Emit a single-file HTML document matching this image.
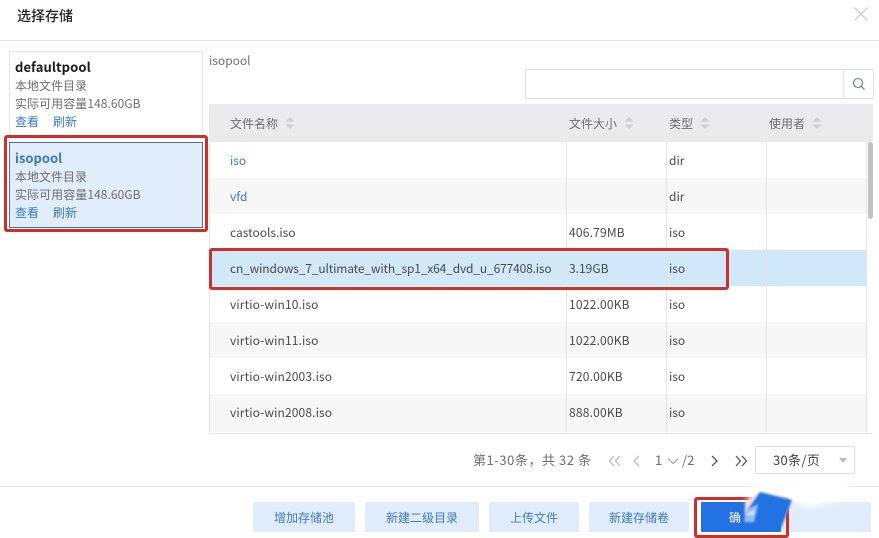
<!DOCTYPE html>
<html lang="zh"><head><meta charset="utf-8"><title>选择存储</title>
<style>
html,body{margin:0;padding:0;width:879px;height:538px;overflow:hidden;background:#fff}
body{position:relative;font-family:"Noto Sans CJK SC","Liberation Sans",sans-serif;font-size:12px;color:#555}
.a{position:absolute}
.t{position:absolute;white-space:nowrap;line-height:16px}
.l{background:#e4e4e6}
.blue{color:#3a7cbd}
.g{color:#6e6e6e}
.btn{position:absolute;top:502px;height:30px;background:#e1ecfa;color:#3f7cc0;text-align:center;line-height:32px;border-radius:1px}
.red{position:absolute;border:3px solid #cf2e29;border-radius:3px;box-sizing:border-box}
.c{color:#4a4a4a}
.v{letter-spacing:.12px}
.n{letter-spacing:.2px}
.p{font-size:13px}
</style></head><body>
<div class="t" style="left:17px;top:8px;font-size:14px;color:#222;font-weight:500">选择存储</div>
<svg class="a" style="left:853px;top:7px" width="16" height="14"><path d="M1.500 0.500L14.500 13.500M14.500 0.500L1.500 13.500" stroke="#c4c4c4" stroke-width="1.100" fill="none"/></svg>
<div class="a l" style="left:0;top:40px;width:879px;height:1px"></div>

<div class="a" style="left:9px;top:51px;width:192px;height:85px;border:1px solid #e5e5e5;border-bottom:0"></div>
<div class="t" style="left:15px;top:59px;font-size:13px;font-weight:700;color:#1a1a1a;letter-spacing:.1px">defaultpool</div>
<div class="t g" style="left:15px;top:78px">本地文件目录</div>
<div class="t g" style="left:15px;top:96px;letter-spacing:.06px">实际可用容量148.60GB</div>
<div class="t blue" style="left:15px;top:114px">查看</div>
<div class="t blue" style="left:53px;top:114px">刷新</div>

<div class="a" style="left:9px;top:142px;width:192px;height:84px;background:#e2edfb;border:1px solid #44709f"></div>
<div class="t blue" style="left:15px;top:150px;font-size:13px;font-weight:700">isopool</div>
<div class="t g" style="left:15px;top:169px">本地文件目录</div>
<div class="t g" style="left:15px;top:187px;letter-spacing:.06px">实际可用容量148.60GB</div>
<div class="t blue" style="left:15px;top:205px">查看</div>
<div class="t blue" style="left:53px;top:205px">刷新</div>
<div class="red" style="left:4px;top:135px;width:204px;height:97px"></div>

<div class="t" style="left:209px;top:53px;color:#6e6e6e">isopool</div>
<div class="a" style="left:525px;top:69px;width:349px;height:30px;box-sizing:border-box;border:1px solid #e0e0e0;border-radius:2px"></div>
<div class="a l" style="left:843px;top:70px;width:1px;height:28px"></div>
<svg class="a" style="left:851px;top:76px" width="16" height="16"><circle cx="7" cy="7" r="4.500" stroke="#4f7fb0" stroke-width="1.100" fill="none"/><path d="M10.300 10.300L13.500 13.500" stroke="#4f7fb0" stroke-width="1.200"/></svg>

<!-- table -->
<div class="a" style="left:209px;top:104px;width:664px;height:38px;background:#ebebed"></div>
<div class="a" style="left:209px;top:178px;width:658px;height:36px;background:#f7f7f8"></div>
<div class="a" style="left:209px;top:250px;width:658px;height:36px;background:#d0e8f7"></div>
<div class="a" style="left:209px;top:322px;width:658px;height:36px;background:#f7f7f8"></div>
<div class="a" style="left:209px;top:394px;width:658px;height:38px;background:#f7f7f8"></div>
<div class="a l" style="left:209px;top:142px;width:1px;height:291px"></div>
<div class="a l" style="left:566px;top:142px;width:1px;height:291px"></div>
<div class="a l" style="left:666px;top:142px;width:1px;height:291px"></div>
<div class="a l" style="left:766px;top:142px;width:1px;height:291px"></div>
<div class="a l" style="left:866px;top:142px;width:1px;height:291px"></div>
<div class="a l" style="left:209px;top:433px;width:664px;height:1px"></div>
<div class="a" style="left:868px;top:142px;width:5px;height:77px;background:#c2c2c4;border-radius:3px"></div>

<div class="t g" style="left:230px;top:116px">文件名称</div>
<div class="t g" style="left:569px;top:116px">文件大小</div>
<div class="t g" style="left:669px;top:116px">类型</div>
<div class="t g" style="left:769px;top:116px">使用者</div>
<svg class="a" style="left:285px;top:117px" width="10" height="12"><path d="M5 0L9.500 4.500H0.500ZM5 12L9.500 7.500H0.500Z" fill="#cfcfd2"/></svg>
<svg class="a" style="left:624px;top:117px" width="10" height="12"><path d="M5 0L9.500 4.500H0.500ZM5 12L9.500 7.500H0.500Z" fill="#cfcfd2"/></svg>
<svg class="a" style="left:700px;top:117px" width="10" height="12"><path d="M5 0L9.500 4.500H0.500ZM5 12L9.500 7.500H0.500Z" fill="#cfcfd2"/></svg>
<svg class="a" style="left:812px;top:117px" width="10" height="12"><path d="M5 0L9.500 4.500H0.500ZM5 12L9.500 7.500H0.500Z" fill="#cfcfd2"/></svg>

<div class="t blue" style="left:230px;top:153px">iso</div><div class="t c" style="left:669px;top:153px">dir</div>
<div class="t blue" style="left:230px;top:189px">vfd</div><div class="t c" style="left:669px;top:189px">dir</div>
<div class="t c" style="left:230px;top:225px">castools.iso</div><div class="t c n" style="left:569px;top:225px">406.79MB</div><div class="t c" style="left:669px;top:225px">iso</div>
<div class="t c" style="left:230px;top:261px;letter-spacing:-.155px">cn_windows_7_ultimate_with_sp1_x64_dvd_u_677408.iso</div><div class="t c" style="left:569px;top:261px">3.19GB</div><div class="t c" style="left:669px;top:261px">iso</div>
<div class="t c v" style="left:230px;top:297px">virtio-win10.iso</div><div class="t c n" style="left:569px;top:297px">1022.00KB</div><div class="t c" style="left:669px;top:297px">iso</div>
<div class="t c v" style="left:230px;top:333px">virtio-win11.iso</div><div class="t c n" style="left:569px;top:333px">1022.00KB</div><div class="t c" style="left:669px;top:333px">iso</div>
<div class="t c v" style="left:230px;top:369px">virtio-win2003.iso</div><div class="t c n" style="left:569px;top:369px">720.00KB</div><div class="t c" style="left:669px;top:369px">iso</div>
<div class="t c v" style="left:230px;top:405px">virtio-win2008.iso</div><div class="t c n" style="left:569px;top:405px">888.00KB</div><div class="t c" style="left:669px;top:405px">iso</div>
<div class="red" style="left:209px;top:248px;width:520px;height:42px"></div>

<!-- pager -->
<div class="t g p" style="left:473px;top:452px;letter-spacing:.55px">第1-30条，共 32 条</div>
<svg class="a" style="left:608px;top:455px" width="14" height="12"><path d="M6 1L1.500 6L6 11M12 1L7.500 6L12 11" stroke="#bcbcbc" stroke-width="1.300" fill="none"/></svg>
<svg class="a" style="left:632px;top:455px" width="9" height="12"><path d="M7 1L2 6L7 11" stroke="#bcbcbc" stroke-width="1.300" fill="none"/></svg>
<div class="t g p" style="left:655px;top:452px">1</div>
<svg class="a" style="left:667px;top:457px" width="12" height="8"><path d="M1 1.500L6 6.500L11 1.500" stroke="#999" stroke-width="1" fill="none"/></svg>
<div class="t g p" style="left:682px;top:452px">/2</div>
<svg class="a" style="left:710px;top:455px" width="9" height="12"><path d="M2 1L7 6L2 11" stroke="#555" stroke-width="1.300" fill="none"/></svg>
<svg class="a" style="left:734px;top:455px" width="14" height="12"><path d="M2 1L6.500 6L2 11M8 1L12.500 6L8 11" stroke="#555" stroke-width="1.300" fill="none"/></svg>
<div class="a" style="left:755px;top:446px;width:100px;height:28px;box-sizing:border-box;border:1px solid #ddd;border-radius:1px"></div>
<div class="t p" style="left:773px;top:452px;color:#444;letter-spacing:.3px">30条/页</div>
<svg class="a" style="left:839px;top:458px" width="8" height="5"><path d="M0 0H8L4 5Z" fill="#bbb"/></svg>

<div class="a l" style="left:0;top:486px;width:879px;height:1px"></div>

<div class="btn" style="left:253px;width:102px">增加存储池</div>
<div class="btn" style="left:365px;width:114px">新建二级目录</div>
<div class="btn" style="left:489px;width:90px">上传文件</div>
<div class="btn" style="left:589px;width:100px">新建存储卷</div>
<div class="btn" style="left:780px;width:91px"></div>
<div class="btn" style="left:701px;width:80px;background:#2272e3;color:#fff;text-align:left;text-indent:28px">确</div>
<div class="red" style="left:694px;top:497px;width:95px;height:41px"></div>
<svg class="a" style="left:730px;top:470px" width="149" height="68"><defs><filter id="b"><feGaussianBlur stdDeviation="4"/></filter><filter id="b2"><feGaussianBlur stdDeviation="1"/></filter></defs>
<path d="M20 14L125 8L112 28L80 38L60 30L18 32Z" fill="#fff" filter="url(#b)"/>
<path d="M15 32L30 22L62 30L56 45H15Z" fill="#ffdede" filter="url(#b2)"/>
<path d="M14 45L30 22L62 30L51 58H20L25 40Z" fill="#2272e3" filter="url(#b2)"/>
<path d="M16 40L28 34L24 52L14 52Z" fill="#cfe0fa" filter="url(#b2)" opacity=".7"/></svg>
</body></html>
